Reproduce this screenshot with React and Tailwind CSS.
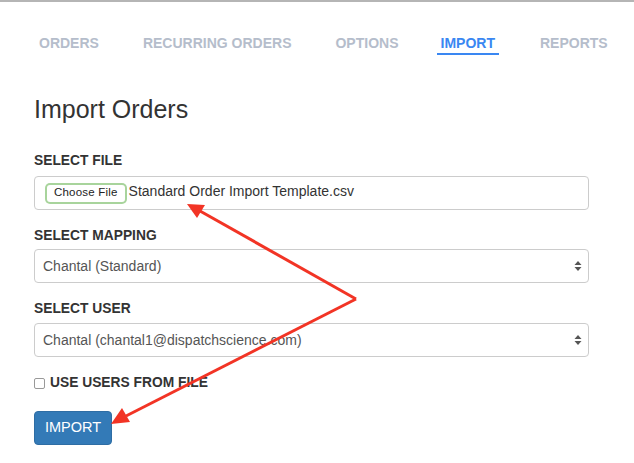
import React from "react";

const tabs = ["ORDERS", "RECURRING ORDERS", "OPTIONS", "IMPORT", "REPORTS"];

function SelectArrows() {
  return (
    <svg width="8" height="12" viewBox="0 0 8 12" className="absolute right-[6px] top-1/2 -translate-y-1/2">
      <path d="M4 1 L7.5 5 L0.5 5 Z" fill="#555" />
      <path d="M4 11 L7.5 7 L0.5 7 Z" fill="#555" />
    </svg>
  );
}

export default function App() {
  return (
    <div className="relative w-[634px] h-[463px] bg-white overflow-hidden border-t-2 border-[#b5b5b5]" style={{ fontFamily: '"Liberation Sans", Arial, sans-serif' }}>
      <nav className="flex items-start h-[61px] pt-[34px] pl-[39px] whitespace-nowrap">
        {tabs.map((t) => (
          <div
            key={t}
            className={
              "shrink-0 text-[14px] font-bold leading-[14px] " +
              (t === "IMPORT"
                ? "text-[#3a87f2] border-b-2 border-[#3a87f2] px-[4px] pb-[3px] mr-[41px] ml-[-6px]"
                : "text-[#b5bdcb] mr-[44px]")
            }
          >
            {t}
          </div>
        ))}
      </nav>
      <div className="pl-[34px] pr-[45px]">
        <h1 className="text-[25px] leading-[28px] text-[#333] mt-[32px] mb-[30px]">Import Orders</h1>

        <label className="block text-[13.8px] font-bold text-[#333] leading-[16px] mb-[7px]">SELECT FILE</label>
        <div className="h-[34px] border border-[#ccc] rounded-[4px] flex items-center pl-[10px]">
          <div className="rounded-[5px] p-[2px] bg-[#a8d49c]">
            <div className="bg-white rounded-[3px] px-[7px] h-[17px] flex items-center text-[11.5px] text-[#222] tracking-[0.2px]">Choose File</div>
          </div>
          <span className="ml-[2px] text-[14px] text-[#333] -mt-[4px]">Standard Order Import Template.csv</span>
        </div>

        <label className="block text-[13.8px] font-bold text-[#333] leading-[16px] mt-[18px] mb-[5px]">SELECT MAPPING</label>
        <div className="relative h-[34px] border border-[#ccc] rounded-[4px] flex items-center pl-[8px] text-[14px] text-[#555]">
          Chantal (Standard)
          <SelectArrows />
        </div>

        <label className="block text-[13.8px] font-bold text-[#333] leading-[16px] mt-[18px] mb-[6px]">SELECT USER</label>
        <div className="relative h-[34px] border border-[#ccc] rounded-[4px] flex items-center pl-[8px] text-[14px] text-[#555]">
          Chantal (chantal1@dispatchscience.com)
          <SelectArrows />
        </div>

        <div className="flex items-center mt-[18px]">
          <div className="w-[11px] h-[11px] border border-[#999] rounded-[2px] bg-white" />
          <span className="ml-[5px] text-[13.8px] font-bold text-[#333] leading-[16px]">USE USERS FROM FILE</span>
        </div>

        <button className="mt-[20px] w-[78px] h-[34px] bg-[#337ab7] border border-[#2e6da4] rounded-[4px] text-white text-[14.5px] flex items-center justify-center">
          IMPORT
        </button>
      </div>

      <svg className="absolute inset-0 pointer-events-none" width="634" height="463">
        <line x1="356" y1="297" x2="200" y2="209" stroke="#f23425" strokeWidth="3" />
        <polygon points="187,202 205,203 197,216" fill="#f23425" />
        <line x1="356" y1="297" x2="126" y2="414" stroke="#f23425" strokeWidth="3" />
        <polygon points="111,422 122,406 130,420" fill="#f23425" />
      </svg>
    </div>
  );
}
